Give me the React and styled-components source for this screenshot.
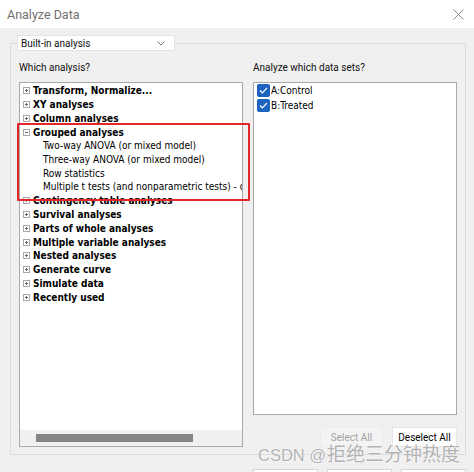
import React from 'react'
import styled, { createGlobalStyle } from 'styled-components'

const GlobalStyle = createGlobalStyle`
  html, body { margin: 0; padding: 0; background: #f0f0f0; }
  body { width: 474px; height: 472px; overflow: hidden; }
`

const tree = [
  { text: 'Transform, Normalize...' },
  { text: 'XY analyses' },
  { text: 'Column analyses' },
  {
    text: 'Grouped analyses',
    open: true,
    children: [
      'Two-way ANOVA (or mixed model)',
      'Three-way ANOVA (or mixed model)',
      'Row statistics',
      'Multiple t tests (and nonparametric tests) - one per row',
    ],
  },
  { text: 'Contingency table analyses' },
  { text: 'Survival analyses' },
  { text: 'Parts of whole analyses' },
  { text: 'Multiple variable analyses' },
  { text: 'Nested analyses' },
  { text: 'Generate curve' },
  { text: 'Simulate data' },
  { text: 'Recently used' },
]

const dataSets = ['A:Control', 'B:Treated']

export default function App() {
  return (
    <>
      <GlobalStyle />
      <Window>
        <TitleBar>
          <Title>Analyze Data</Title>
          <Close>
            <svg width="11" height="11" viewBox="0 0 11 11">
              <path d="M0.5 0.5L10.5 10.5M10.5 0.5L0.5 10.5" stroke="#8a8a8a" strokeWidth="1" fill="none" />
            </svg>
          </Close>
        </TitleBar>
        <Body>
          <GroupBox>
            <Legend>
              <Dropdown>
                <span>Built-in analysis</span>
                <svg width="8" height="5" viewBox="0 0 8 5">
                  <path d="M0.5 0.5L4 4L7.5 0.5" stroke="#777" strokeWidth="1" fill="none" />
                </svg>
              </Dropdown>
            </Legend>
            <Columns>
              <Column>
                <Label>Which analysis?</Label>
                <TreeBox>
                  <TreeScroll>
                    {tree.map(node => (
                      <React.Fragment key={node.text}>
                        <TreeRow>
                          <Expander>
                            <svg width="7" height="7" viewBox="0 0 7 7">
                              <rect x="0.5" y="0.5" width="6" height="6" fill="#fff" stroke="#a8a8a8" />
                              <path d="M2 3.5H5" stroke="#666" />
                              {!node.open && <path d="M3.5 2V5" stroke="#666" />}
                            </svg>
                          </Expander>
                          <NodeText>{node.text}</NodeText>
                        </TreeRow>
                        {node.children && node.children.map(c => (
                          <ChildRow key={c}>{c}</ChildRow>
                        ))}
                      </React.Fragment>
                    ))}
                  </TreeScroll>
                  <HScroll>
                    <Thumb />
                  </HScroll>
                </TreeBox>
              </Column>
              <Column>
                <Label>Analyze which data sets?</Label>
                <DataBox>
                  {dataSets.map(d => (
                    <DataRow key={d}>
                      <Check>
                        <svg width="9" height="7" viewBox="0 0 9 7">
                          <path d="M1 3.5L3.3 5.8L8 1" stroke="#fff" strokeWidth="1.2" fill="none" />
                        </svg>
                      </Check>
                      {d}
                    </DataRow>
                  ))}
                </DataBox>
                <ButtonRow>
                  <Button $w={63} disabled>Select All</Button>
                  <Button $w={65}>Deselect All</Button>
                </ButtonRow>
              </Column>
            </Columns>
          </GroupBox>
          <Footer>
            <FooterButton />
            <FooterButton />
            <FooterButton />
          </Footer>
        </Body>
        <Highlight />
        <Watermark>
          CSDN @<Cjk>拒绝三分钟热度</Cjk>
        </Watermark>
      </Window>
    </>
  )
}

const Window = styled.div`
  position: relative;
  width: 474px;
  height: 472px;
  background: #f0f0f0;
  overflow: hidden;
  font-family: Roboto, "Noto Sans", sans-serif;
`
const TitleBar = styled.div`
  height: 28px;
  background: #fff;
  display: flex;
  align-items: center;
  justify-content: space-between;
  padding: 0 8px 0 7px;
`
const Title = styled.div`
  font-family: Roboto, sans-serif;
  font-size: 12.5px;
  color: #707070;
`
const Close = styled.div`
  display: flex;
  align-items: center;
  padding-right: 2px;
`
const Body = styled.div`
  padding: 7px 8px 0 10px;
`
const GroupBox = styled.fieldset`
  margin: 0;
  border: 1px solid #dcdcdc;
  padding: 10px 7px 7px 8px;
  height: 420px;
  box-sizing: border-box;
`
const Legend = styled.legend`
  padding: 0;
  margin-left: -2px;
`
const Dropdown = styled.div`
  width: 158px;
  height: 16px;
  box-sizing: border-box;
  background: #fff;
  border: 1px solid #e4e4e4;
  display: flex;
  align-items: center;
  justify-content: space-between;
  padding: 0 9px 0 3px;
  font-size: 10px;
  color: #111;
`
const Columns = styled.div`
  display: grid;
  grid-template-columns: 224px 204px;
  column-gap: 10px;
`
const Column = styled.div`
  display: flex;
  flex-direction: column;
`
const Label = styled.div`
  font-size: 10px;
  color: #111;
  height: 14px;
  line-height: 14px;
  margin: 0 0 7px;
`
const TreeBox = styled.div`
  height: 365px;
  box-sizing: border-box;
  background: #fff;
  border: 1px solid #a9a9a9;
  display: flex;
  flex-direction: column;
`
const TreeScroll = styled.div`
  flex: 1;
  overflow: hidden;
  padding: 1px 0 0 3px;
`
const TreeRow = styled.div`
  height: 13.75px;
  display: flex;
  align-items: center;
  white-space: nowrap;
`
const Expander = styled.span`
  display: flex;
  width: 10px;
`
const NodeText = styled.span`
  font-family: "DejaVu Sans Condensed", "DejaVu Sans", sans-serif;
  font-weight: bold;
  font-size: 10px;
  color: #000;
`
const ChildRow = styled.div`
  height: 13.75px;
  line-height: 13.75px;
  padding-left: 20px;
  white-space: nowrap;
  font-family: "DejaVu Sans Condensed", "DejaVu Sans", sans-serif;
  font-size: 10px;
  color: #000;
`
const HScroll = styled.div`
  height: 16px;
  background: #f0f0f0;
  display: flex;
  align-items: center;
  padding-left: 16px;
`
const Thumb = styled.div`
  width: 157px;
  height: 8px;
  background: #848484;
`
const DataBox = styled.div`
  height: 333px;
  box-sizing: border-box;
  background: #fff;
  border: 1px solid #a9a9a9;
  padding: 0 3px;
`
const DataRow = styled.div`
  height: 15px;
  display: flex;
  align-items: center;
  gap: 1px;
  font-family: "DejaVu Sans Condensed", "DejaVu Sans", sans-serif;
  font-size: 10px;
  color: #000;
`
const Check = styled.span`
  width: 13px;
  height: 13px;
  border-radius: 2px;
  background: #1c64c0;
  display: flex;
  align-items: center;
  justify-content: center;
`
const ButtonRow = styled.div`
  display: flex;
  justify-content: flex-end;
  gap: 9px;
  margin-top: 12px;
`
const Button = styled.div`
  width: ${p => p.$w}px;
  height: 20px;
  line-height: 20px;
  box-sizing: border-box;
  text-align: center;
  font-family: Roboto, sans-serif;
  font-size: 10px;
  color: ${p => (p.disabled ? '#a3a3a3' : '#000')};
  background: ${p => (p.disabled ? '#f3f3f3' : '#fff')};
  border: 1px solid ${p => (p.disabled ? '#ececec' : '#e6e6e6')};
`
const Footer = styled.div`
  display: flex;
  justify-content: flex-end;
  gap: 9px;
  margin-top: 14px;
`
const FooterButton = styled.div`
  width: 65px;
  height: 23px;
  box-sizing: border-box;
  background: #fff;
  border: 1px solid #d6d6d6;
`
const Highlight = styled.div`
  position: absolute;
  left: 17px;
  top: 123px;
  width: 233px;
  height: 78px;
  box-sizing: border-box;
  border: 2px solid #e3262a;
  border-radius: 1px;
`
const Watermark = styled.div`
  position: absolute;
  left: 258px;
  top: 441px;
  font-family: "Liberation Sans", "Noto Sans CJK SC", sans-serif;
  font-size: 16.5px;
  line-height: 24px;
  color: #b2b2b2;
  text-shadow: 0 0 2px #fff, 0 0 1px #fff;
  white-space: nowrap;
`
const Cjk = styled.span`
  font-family: "Noto Sans CJK SC", sans-serif;
  font-size: 19px;
  margin-left: 1px;
`
